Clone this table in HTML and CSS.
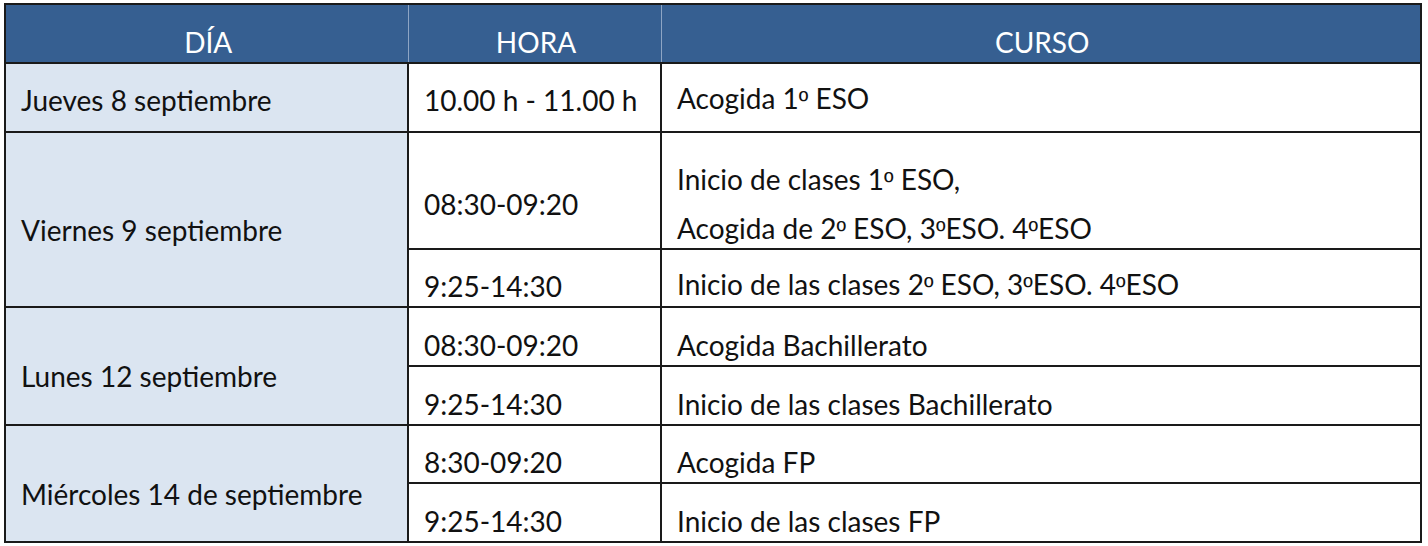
FILE: index.html
```html
<!DOCTYPE html>
<html lang="es">
<head>
<meta charset="utf-8">
<title>Calendario de inicio de curso</title>
<link rel="stylesheet" href="styles.css">
</head>
<body>
<table class="schedule">
  <colgroup>
    <col class="col-day">
    <col class="col-hour">
    <col class="col-course">
  </colgroup>
  <thead>
    <tr class="row-head">
      <th>DÍA</th>
      <th>HORA</th>
      <th>CURSO</th>
    </tr>
  </thead>
  <tbody>
    <tr class="row-first">
      <td class="day day-first">Jueves 8 septiembre</td>
      <td class="cell cell-first">10.00 h - 11.00 h</td>
      <td class="cell cell-first">Acogida 1<span class="ord">º</span> ESO</td>
    </tr>
    <tr class="row-double">
      <td class="day" rowspan="2">Viernes 9 septiembre</td>
      <td class="cell cell-mid">08:30-09:20</td>
      <td class="cell cell-two"><p>Inicio de clases 1<span class="ord">º</span> ESO,</p><p>Acogida de 2<span class="ord">º</span> ESO, 3<span class="ord">º</span>ESO. 4<span class="ord">º</span>ESO</p></td>
    </tr>
    <tr class="row-a">
      <td class="cell">9:25-14:30</td>
      <td class="cell">Inicio de las clases 2<span class="ord">º</span> ESO, 3<span class="ord">º</span>ESO. 4<span class="ord">º</span>ESO</td>
    </tr>
    <tr class="row-b">
      <td class="day" rowspan="2">Lunes 12 septiembre</td>
      <td class="cell">08:30-09:20</td>
      <td class="cell">Acogida Bachillerato</td>
    </tr>
    <tr class="row-b">
      <td class="cell">9:25-14:30</td>
      <td class="cell">Inicio de las clases Bachillerato</td>
    </tr>
    <tr class="row-a">
      <td class="day" rowspan="2">Miércoles 14 de septiembre</td>
      <td class="cell">8:30-09:20</td>
      <td class="cell">Acogida FP</td>
    </tr>
    <tr class="row-b">
      <td class="cell">9:25-14:30</td>
      <td class="cell">Inicio de las clases FP</td>
    </tr>
  </tbody>
</table>
</body>
</html>
```
FILE: styles.css
```css
html, body {
  margin: 0;
  padding: 0;
  background: #ffffff;
}

body {
  padding: 3px 0 0 4px;
  font-family: Lato, "Open Sans", "Liberation Sans", sans-serif;
  color: #111111;
}

.schedule {
  border-collapse: collapse;
  width: 1418px;
  table-layout: fixed;
  font-size: 28px;
}

.col-day { width: 403px; }
.col-hour { width: 253px; }

.schedule th,
.schedule td {
  border: 2px solid #1a1a1a;
  padding-left: 15px;
  padding-right: 12px;
  text-align: left;
  font-weight: normal;
  line-height: 36px;
}

.row-head { height: 59px; }

.schedule th {
  background: #365f91;
  color: #ffffff;
  text-align: center;
  vertical-align: bottom;
  padding-top: 0;
  padding-bottom: 2px;
  border-left-color: #8ea5c4;
  border-right-color: #8ea5c4;
  border-left-width: 1px;
  border-right-width: 1px;
}

.schedule th:first-child { border-left: 2px solid #1a1a1a; }
.schedule th:last-child { border-right: 2px solid #1a1a1a; }

.row-first { height: 69px; }
.row-double { height: 117px; }
.row-a { height: 58px; }
.row-b { height: 59px; }

.day {
  background: #dbe5f1;
  vertical-align: middle;
  padding-top: 20px;
  padding-bottom: 0;
}

.day-first {
  vertical-align: bottom;
  padding-top: 0;
  padding-bottom: 13px;
}

.cell {
  vertical-align: bottom;
  padding-top: 0;
  padding-bottom: 2px;
}

.cell-first {
  padding-bottom: 13px;
}

.cell-mid {
  padding-bottom: 26px;
}

.cell-two {
  padding-bottom: 0;
}

.cell p {
  margin: 0;
}

.cell p + p {
  margin-top: 11px;
}

.ord {
  font-family: "Liberation Sans", Arial, sans-serif;
  font-size: 26px;
}
```
